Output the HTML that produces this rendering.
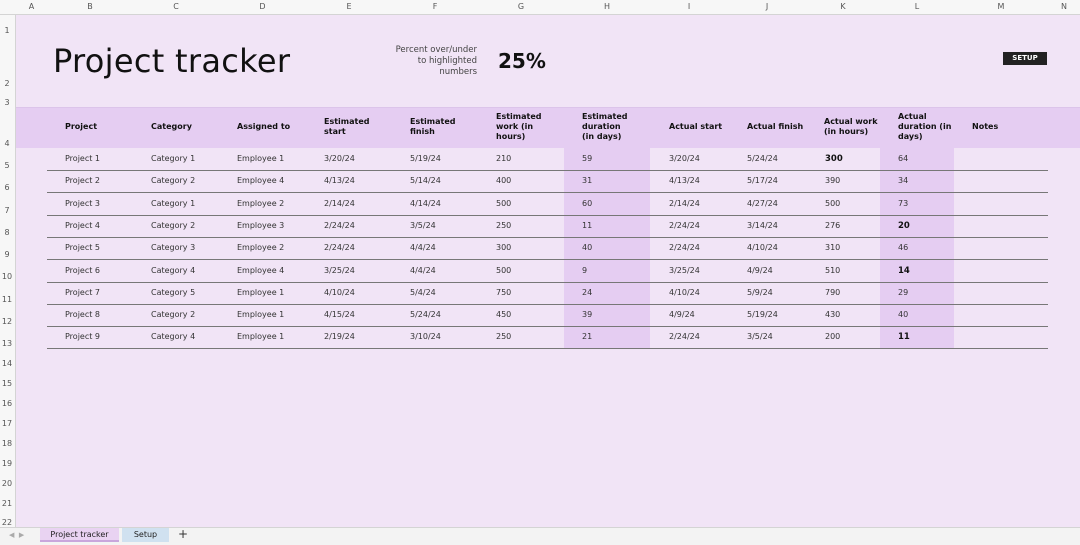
<!DOCTYPE html><html><head><style>
*{margin:0;padding:0;box-sizing:border-box}
body{width:1080px;height:545px;overflow:hidden;background:#f1e4f6;font-family:"DejaVu Sans","Liberation Sans",sans-serif;position:relative}
.abs{position:absolute}
.colh{top:0;left:0;width:1080px;height:15px;background:#f7f7f7;border-bottom:1px solid #d4d4d4}
.colh span{position:absolute;top:2px;font-size:8px;color:#555;text-align:center}
.rowh{top:15px;left:0;width:16px;height:512px;background:#f7f7f7;border-right:1px solid #d4d4d4}
.rowh span{position:absolute;left:0;width:14px;text-align:center;font-size:8px;color:#555}
.t{font-size:8px;color:#333;position:absolute}
.h{font-size:8px;font-weight:bold;color:#111;position:absolute;line-height:10px}
</style></head><body>
<div class="abs colh">
<span style="left:16px;width:31px">A</span><span style="left:47px;width:86px">B</span><span style="left:133px;width:86px">C</span><span style="left:219px;width:87px">D</span><span style="left:306px;width:86px">E</span><span style="left:392px;width:86px">F</span><span style="left:478px;width:86px">G</span><span style="left:564px;width:86px">H</span><span style="left:650px;width:78px">I</span><span style="left:728px;width:78px">J</span><span style="left:806px;width:74px">K</span><span style="left:880px;width:74px">L</span><span style="left:954px;width:94px">M</span><span style="left:1048px;width:32px">N</span>
</div>
<div class="abs rowh">
<span style="top:11px">1</span><span style="top:64px">2</span><span style="top:83px">3</span><span style="top:124px">4</span><span style="top:146px">5</span><span style="top:168px">6</span><span style="top:191px">7</span><span style="top:213px">8</span><span style="top:235px">9</span><span style="top:257px">10</span><span style="top:280px">11</span><span style="top:302px">12</span><span style="top:324px">13</span><span style="top:344px">14</span><span style="top:364px">15</span><span style="top:384px">16</span><span style="top:404px">17</span><span style="top:424px">18</span><span style="top:444px">19</span><span style="top:464px">20</span><span style="top:484px">21</span><span style="top:503px">22</span>
</div>
<div class="abs" style="left:53px;top:42px;font-size:32px;color:#111;letter-spacing:0.3px">Project tracker</div>
<div class="abs" style="left:380px;top:45px;width:97px;text-align:right;font-size:8.5px;color:#444;line-height:11px">Percent over/under<br>to highlighted<br>numbers</div>
<div class="abs" style="left:498px;top:49px;font-size:20px;font-weight:bold;color:#111">25%</div>
<div class="abs" style="left:1003px;top:52px;width:44px;height:13px;background:#222;color:#fff;font-size:7px;font-weight:bold;text-align:center;line-height:13px">SETUP</div>
<div class="abs" style="left:16px;top:107px;width:1064px;height:41px;background:#e5cdf2;border-top:1px solid #dcc4ea"></div>
<div class="abs" style="left:564px;top:148px;width:86px;height:201px;background:#e5cdf2"></div>
<div class="abs" style="left:880px;top:148px;width:74px;height:201px;background:#e5cdf2"></div>
<div class="h" style="left:65px;top:122px">Project</div>
<div class="h" style="left:151px;top:122px">Category</div>
<div class="h" style="left:237px;top:122px">Assigned to</div>
<div class="h" style="left:324px;top:117px">Estimated<br>start</div>
<div class="h" style="left:410px;top:117px">Estimated<br>finish</div>
<div class="h" style="left:496px;top:112px">Estimated<br>work (in<br>hours)</div>
<div class="h" style="left:582px;top:112px">Estimated<br>duration<br>(in days)</div>
<div class="h" style="left:669px;top:122px">Actual start</div>
<div class="h" style="left:747px;top:122px">Actual finish</div>
<div class="h" style="left:824px;top:117px">Actual work<br>(in hours)</div>
<div class="h" style="left:898px;top:112px">Actual<br>duration (in<br>days)</div>
<div class="h" style="left:972px;top:122px">Notes</div>
<div id="rows"></div>
<script>
var d=[["Project 1","Category 1","Employee 1","3/20/24","5/19/24","210","59","3/20/24","5/24/24","*300","64"],
["Project 2","Category 2","Employee 4","4/13/24","5/14/24","400","31","4/13/24","5/17/24","390","34"],
["Project 3","Category 1","Employee 2","2/14/24","4/14/24","500","60","2/14/24","4/27/24","500","73"],
["Project 4","Category 2","Employee 3","2/24/24","3/5/24","250","11","2/24/24","3/14/24","276","*20"],
["Project 5","Category 3","Employee 2","2/24/24","4/4/24","300","40","2/24/24","4/10/24","310","46"],
["Project 6","Category 4","Employee 4","3/25/24","4/4/24","500","9","3/25/24","4/9/24","510","*14"],
["Project 7","Category 5","Employee 1","4/10/24","5/4/24","750","24","4/10/24","5/9/24","790","29"],
["Project 8","Category 2","Employee 1","4/15/24","5/24/24","450","39","4/9/24","5/19/24","430","40"],
["Project 9","Category 4","Employee 1","2/19/24","3/10/24","250","21","2/24/24","3/5/24","200","*11"]];
var xs=[65,151,237,324,410,496,582,669,747,825,898],h="";
d.forEach(function(r,i){var y=148+i*22.3;
r.forEach(function(c,j){var b=c[0]=="*";h+='<div class="t" style="left:'+xs[j]+'px;top:'+(y+6)+'px;'+(b?'font-weight:bold;color:#111;font-size:8.5px':'')+'">'+(b?c.slice(1):c)+'</div>'});
h+='<div class="abs" style="left:47px;top:'+(y+22)+'px;width:1001px;height:1px;background:#777"></div>'});
document.getElementById("rows").innerHTML=h;
</script>
<div class="abs" style="left:0;top:527px;width:1080px;height:18px;background:#f3f3f3;border-top:1px solid #d4d4d4"></div>
<div class="abs" style="left:9px;top:531px;font-size:7px;color:#aaa">◀ &nbsp;▶</div>
<div class="abs" style="left:40px;top:528px;width:79px;height:14px;background:#e9d3f2;font-size:8px;color:#222;text-align:center;line-height:14px;border-bottom:2px solid #c9a6dc">Project tracker</div>
<div class="abs" style="left:122px;top:528px;width:47px;height:14px;background:#d0e1f0;font-size:8px;color:#222;text-align:center;line-height:14px">Setup</div>
<div class="abs" style="left:178px;top:527px;font-size:12px;color:#333">+</div>
</body></html>
